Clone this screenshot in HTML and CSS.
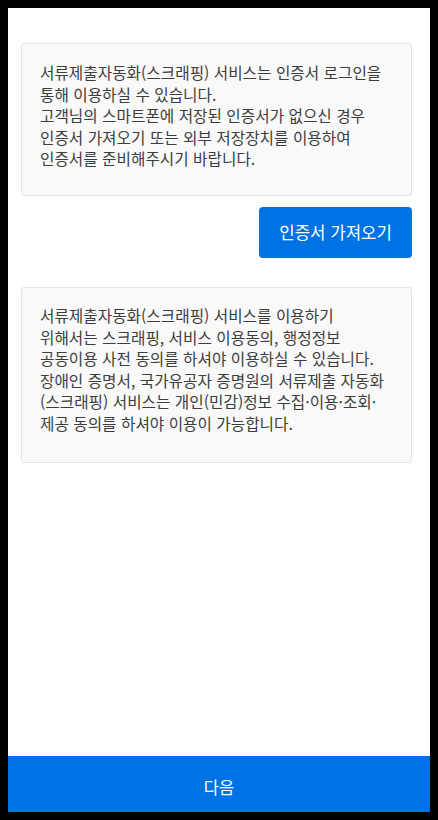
FILE: index.html
```html
<!DOCTYPE html>
<html lang="ko">
<head>
<meta charset="utf-8">
<link rel="stylesheet" href="styles.css">
</head>
<body>
<div class="screen">
  <main class="content">
    <div class="notice">서류제출자동화(스크래핑) 서비스는 인증서 로그인을<br>통해 이용하실 수 있습니다.<br>고객님의 스마트폰에 저장된 인증서가 없으신 경우<br>인증서 가져오기 또는 외부 저장장치를 이용하여<br>인증서를 준비해주시기 바랍니다.</div>
    <div class="actions">
      <button class="btn-import" type="button">인증서 가져오기</button>
    </div>
    <div class="notice notice-second">서류제출자동화(스크래핑) 서비스를 이용하기<br>위해서는 스크래핑, 서비스 이용동의, 행정정보<br>공동이용 사전 동의를 하셔야 이용하실 수 있습니다.<br>장애인 증명서, 국가유공자 증명원의 서류제출 자동화<br>(스크래핑) 서비스는 개인(민감)정보 수집·이용·조회·<br>제공 동의를 하셔야 이용이 가능합니다.</div>
  </main>
  <button class="btn-next" type="button">다음</button>
</div>
</body>
</html>
```
FILE: styles.css
```css
html, body {
  margin: 0;
  padding: 0;
  background: #000;
}
body {
  font-family: "Noto Sans CJK KR", "Noto Sans", sans-serif;
  color: #3d3d3d;
}
.screen {
  margin: 8px;
  height: 804px;
  background: #fff;
  display: flex;
  flex-direction: column;
}
.content {
  flex: 1;
  padding: 35px 18px 0 13px;
  display: flex;
  flex-direction: column;
}
.notice {
  background: #f9f9f9;
  border: 1px solid #e3e3e3;
  border-radius: 3px;
  padding: 18px 18px 25px;
  font-size: 15.7px;
  line-height: 21.6px;
  color: #3d3d3d;
  white-space: nowrap;
}
.notice-second {
  margin-top: 29px;
  padding: 17px 18px 27px;
}
.actions {
  display: flex;
  justify-content: flex-end;
  margin-top: 11px;
}
.btn-import {
  height: 51px;
  padding: 0 20px;
  border: 0;
  border-radius: 4px;
  background: #0073e4;
  color: #fff;
  font-family: inherit;
  font-size: 16.8px;
}
.btn-next {
  height: 56px;
  border: 0;
  background: #0073e4;
  color: #fff;
  font-family: inherit;
  font-size: 16.5px;
  padding: 6px 0 0 0;
}
```
